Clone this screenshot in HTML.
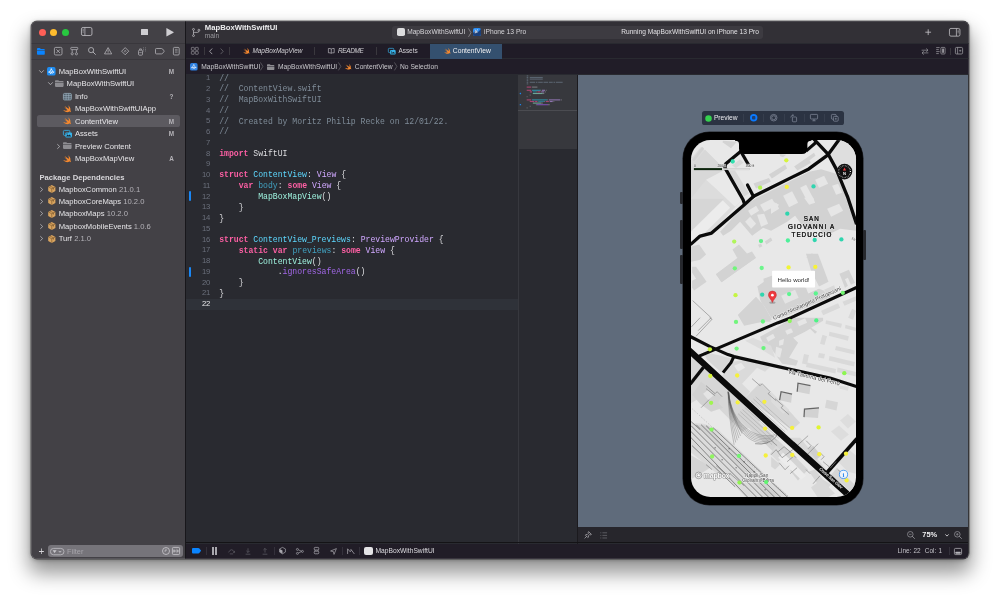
<!DOCTYPE html>
<html><head><meta charset="utf-8">
<style>
*{margin:0;padding:0;box-sizing:border-box}
html,body{width:1000px;height:601px;overflow:hidden;background:#fff}
body{position:relative;font-family:"Liberation Sans",sans-serif;font-size:7.65px;color:#e4e3e6}
.a{position:absolute}
svg{position:absolute;overflow:visible}
#win{will-change:transform;position:absolute;left:31px;top:21px;width:937.5px;height:537.5px;border-radius:6px;background:#18171b;overflow:hidden}
#shadow{position:absolute;left:31px;top:21px;width:937.5px;height:537.5px;border-radius:6px;box-shadow:0 0 0 0.5px rgba(0,0,0,.5),0 1px 4px rgba(0,0,0,.3),0 12px 20px 2px rgba(0,0,0,.42)}
#rim{position:absolute;left:0;top:0;width:937.5px;height:537.5px;border-radius:6px;box-shadow:inset 0 0 0 0.6px rgba(255,255,255,.22);pointer-events:none}
#side{left:0;top:0;width:153.9px;height:537.5px;background:#434146}
#main{left:155.3px;top:0;width:782.2px;height:537.5px;background:#292a30}
.row{position:absolute;height:12px;line-height:12px;white-space:nowrap;color:#e6e5e8}
.st{position:absolute;left:134.5px;width:12px;height:12px;line-height:12px;text-align:center;font-size:6.4px;font-weight:bold;color:#b5b3b8}
.ver{color:#b4b2b8}
.t1{position:absolute;white-space:nowrap;line-height:10px;height:10px}
#code{position:absolute;left:0;top:0;font-family:"Liberation Mono",monospace;font-size:8.15px;white-space:pre;color:#dfdfe2}
.ln{position:absolute;width:24px;text-align:right;font-family:"Liberation Sans",sans-serif;font-size:7.7px;letter-spacing:-0.25px;height:10.76px;line-height:10.76px}
.cl{position:absolute;height:10.76px;line-height:10.76px}
.c{color:#7f8c98}.k{color:#fc5fa3;font-weight:bold}.t{color:#5dd8ff}.v{color:#d0a8ff}.d{color:#41a1c0}.p{color:#9ef1dd}.f{color:#a167e6}
</style></head><body>
<div id="shadow"></div>
<div id="win">
<div id="side" class="a">
<div class="a" style="left:0;top:22px;width:153.9px;height:0.6px;background:#39373c"></div>
<div class="a" style="left:0;top:37.6px;width:153.9px;height:0.6px;background:#39373c"></div>
<div class="a" style="left:8.10px;top:7.50px;width:7px;height:7px;border-radius:50%;background:#fe5f57"></div>
<div class="a" style="left:19.30px;top:7.50px;width:7px;height:7px;border-radius:50%;background:#febc2e"></div>
<div class="a" style="left:30.50px;top:7.50px;width:7px;height:7px;border-radius:50%;background:#28c840"></div>
<svg style="left:50px;top:6.2px" width="11.4" height="9" viewBox="0 0 11.4 9"><rect x="0.45" y="0.45" width="10.5" height="8.1" rx="1.6" fill="none" stroke="#b9b8bc" stroke-width="0.9"/><path d="M3.9 0.5 V8.5" stroke="#b9b8bc" stroke-width="0.8"/><path d="M1.5 2.3 H2.9 M1.5 3.7 H2.9 M1.5 5.1 H2.9" stroke="#b9b8bc" stroke-width="0.6"/></svg>
<div class="a" style="left:110.2px;top:7.7px;width:6.6px;height:6.6px;border-radius:0.6px;background:#cfced2"></div>
<svg style="left:135px;top:6.8px" width="8" height="8.6" viewBox="0 0 8 8.6"><path d="M0.4 0.5 Q0.4 0 0.9 0.25 L7.5 3.95 Q7.9 4.3 7.5 4.65 L0.9 8.35 Q0.4 8.6 0.4 8.1 Z" fill="#cfced2"/></svg>
<svg style="left:6px;top:26.85px" width="7.8" height="6.8" viewBox="0 0 7.8 6.8"><path fill="#0a84ff" d="M0 0.9 Q0 0.1 0.8 0.1 L2.6 0.1 Q3.1 0.1 3.4 0.5 L3.8 1 L7 1 Q7.8 1 7.8 1.8 L7.8 2.1 L0 2.1 Z"/><path fill="#0a84ff" d="M0 2.6 L7.8 2.6 L7.8 5.9 Q7.8 6.7 7 6.7 L0.8 6.7 Q0 6.7 0 5.9 Z"/></svg>
<svg style="left:22.6px;top:26.05px" width="8.4" height="8.4" viewBox="0 0 8.4 8.4"><rect x="0.4" y="0.4" width="7.6" height="7.6" rx="1.3" fill="none" stroke="#b4b3b8" stroke-width="0.8"/><path d="M2.7 2.7 L5.7 5.7 M5.7 2.7 L2.7 5.7" stroke="#b4b3b8" stroke-width="0.8" stroke-linecap="round"/></svg>
<svg style="left:39.4px;top:26.05px" width="8.6" height="8.6" viewBox="0 0 8.6 8.6"><rect x="0.8" y="0.4" width="7" height="2.2" rx="0.6" fill="none" stroke="#b4b3b8" stroke-width="0.75"/><path d="M2.2 2.7 V5.6 M6.4 2.7 V5.6" stroke="#b4b3b8" stroke-width="0.75"/><circle cx="2.2" cy="6.8" r="1.1" fill="none" stroke="#b4b3b8" stroke-width="0.75"/><circle cx="6.4" cy="6.8" r="1.1" fill="none" stroke="#b4b3b8" stroke-width="0.75"/></svg>
<svg style="left:56.8px;top:26.35px" width="8" height="8" viewBox="0 0 8 8"><circle cx="3.1" cy="3.1" r="2.6" fill="none" stroke="#b4b3b8" stroke-width="0.85"/><path d="M5.1 5.1 L7.4 7.4" stroke="#b4b3b8" stroke-width="0.95" stroke-linecap="round"/></svg>
<svg style="left:73.4px;top:26.25px" width="8.2" height="7.6" viewBox="0 0 8.2 7.6"><path d="M4.1 0.6 L7.7 6.9 H0.5 Z" fill="none" stroke="#b4b3b8" stroke-width="0.8" stroke-linejoin="round"/><path d="M4.1 2.9 V4.7" stroke="#b4b3b8" stroke-width="0.8" stroke-linecap="round"/><circle cx="4.1" cy="5.8" r="0.45" fill="#b4b3b8"/></svg>
<svg style="left:90.4px;top:26.05px" width="8.4" height="8.4" viewBox="0 0 8.4 8.4"><path d="M4.2 0.6 L7.8 4.2 L4.2 7.8 L0.6 4.2 Z" fill="none" stroke="#b4b3b8" stroke-width="0.8" stroke-linejoin="round"/><path d="M4.2 3.2 L5.2 4.2 L4.2 5.2 L3.2 4.2 Z" fill="none" stroke="#b4b3b8" stroke-width="0.6"/></svg>
<svg style="left:107px;top:25.95px" width="9" height="8.6" viewBox="0 0 9 8.6"><rect x="0.5" y="3.2" width="4" height="5" rx="1" fill="none" stroke="#b4b3b8" stroke-width="0.75"/><path d="M1.6 3.1 V1.9 H3.4 V3.1" fill="none" stroke="#b4b3b8" stroke-width="0.7"/><path d="M1.3 5.6 H3.7" stroke="#b4b3b8" stroke-width="0.6"/><path d="M5.4 0.8 H6 M7 0.8 H7.6 M5.4 2.4 H6 M7 2.4 H7.6 M5.4 4 H6 M7 4 H7.6" stroke="#b4b3b8" stroke-width="0.7"/></svg>
<svg style="left:123.5px;top:27.05px" width="9.6" height="6.4" viewBox="0 0 9.6 6.4"><path d="M1.4 0.5 H6.6 Q7.1 0.5 7.5 0.9 L9 2.8 Q9.3 3.2 9 3.6 L7.5 5.5 Q7.1 5.9 6.6 5.9 H1.4 Q0.5 5.9 0.5 5 V1.4 Q0.5 0.5 1.4 0.5 Z" fill="none" stroke="#b4b3b8" stroke-width="0.8"/></svg>
<svg style="left:142.4px;top:26.05px" width="6.6" height="8.4" viewBox="0 0 6.6 8.4"><rect x="0.4" y="0.4" width="5.8" height="7.6" rx="1.1" fill="none" stroke="#b4b3b8" stroke-width="0.8"/><path d="M2 2.4 H4.6 M2 3.8 H4.6 M2 5.2 H4.6" stroke="#b4b3b8" stroke-width="0.55"/></svg>
<div class="row" style="left:27.7px;top:44.85px">MapBoxWithSwiftUI</div>
<div class="st" style="top:44.85px">M</div>
<svg style="left:8.399999999999999px;top:48.74999999999999px" width="5" height="3.4" viewBox="0 0 5 3.4"><path d="M0.5 0.6 L2.5 2.7 L4.5 0.6" fill="none" stroke="#aeadb2" stroke-width="0.9" stroke-linecap="round" stroke-linejoin="round"/></svg>
<svg style="left:16.2px;top:46.05px" width="8.6" height="8.6" viewBox="0 0 8.6 8.6"><rect width="8.6" height="8.6" rx="1.9" fill="#1f8cf0"/><path d="M4.3 1.9 L2.2 5.6 M4.3 1.9 L6.4 5.6 M1.7 5 H6.9 M3.4 6.7 L4.3 5.2 L5.2 6.7" fill="none" stroke="#fff" stroke-width="0.75" stroke-linecap="round"/></svg>
<div class="row" style="left:35.6px;top:57.30px">MapBoxWithSwiftUI</div>
<svg style="left:16.6px;top:61.199999999999996px" width="5" height="3.4" viewBox="0 0 5 3.4"><path d="M0.5 0.6 L2.5 2.7 L4.5 0.6" fill="none" stroke="#aeadb2" stroke-width="0.9" stroke-linecap="round" stroke-linejoin="round"/></svg>
<svg style="left:23.799999999999997px;top:59.199999999999996px" width="8.6" height="7" viewBox="0 0 8.6 7"><path fill="#8d8c91" d="M0 1 Q0 0.2 0.8 0.2 L2.9 0.2 Q3.4 0.2 3.7 0.6 L4.1 1.1 L7.8 1.1 Q8.6 1.1 8.6 1.9 L8.6 2.2 L0 2.2 Z"/><path fill="#8d8c91" d="M0 2.8 L8.6 2.8 L8.6 6.1 Q8.6 6.9 7.8 6.9 L0.8 6.9 Q0 6.9 0 6.1 Z"/></svg>
<div class="row" style="left:43.9px;top:69.75px">Info</div>
<div class="st" style="top:69.75px">?</div>
<svg style="left:32.0px;top:71.55px" width="8.8" height="7.4" viewBox="0 0 8.8 7.4"><rect x="0.4" y="0.4" width="8" height="6.6" rx="1.2" fill="#52606b" stroke="#9fb6c4" stroke-width="0.7"/><path d="M3.1 0.5 V6.9 M5.7 0.5 V6.9 M0.5 2.6 H8.3 M0.5 4.8 H8.3" stroke="#9fb6c4" stroke-width="0.6"/></svg>
<div class="row" style="left:43.9px;top:82.20px">MapBoxWithSwiftUIApp</div>
<svg style="left:32.4px;top:83.79999999999998px" width="8.2" height="7.6" viewBox="2.3 3.3 18.6 16.8"><path fill="#f5882e" d="M13.543 3.41c4.114 2.47 6.545 7.162 5.549 11.131-.024.093-.05.181-.076.272l.002.001c2.062 2.538 1.5 5.258 1.236 4.745-1.072-2.086-3.066-1.568-4.088-1.043a6.803 6.803 0 0 1-.281.158l-.02.012-.002.002c-2.115 1.123-4.957 1.205-7.812-.022a12.568 12.568 0 0 1-5.64-4.838c.649.48 1.35.902 2.097 1.252 3.019 1.414 6.051 1.311 8.197-.002C9.651 12.73 7.101 9.67 5.146 7.191a10.628 10.628 0 0 1-1.005-1.384c2.34 2.142 6.038 4.83 7.365 5.576C8.69 8.408 6.208 4.743 6.324 4.86c4.436 4.47 8.528 6.996 8.528 6.996.154.085.27.154.36.213.085-.215.16-.437.224-.668.708-2.588-.09-5.548-1.893-7.992z"/></svg>
<div class="a" style="left:6.3px;top:94.15px;width:142.7px;height:12px;border-radius:2.6px;background:#5c5a60"></div>
<div class="row" style="left:43.9px;top:94.65px">ContentView</div>
<div class="st" style="top:94.65px">M</div>
<svg style="left:32.4px;top:96.24999999999999px" width="8.2" height="7.6" viewBox="2.3 3.3 18.6 16.8"><path fill="#f5882e" d="M13.543 3.41c4.114 2.47 6.545 7.162 5.549 11.131-.024.093-.05.181-.076.272l.002.001c2.062 2.538 1.5 5.258 1.236 4.745-1.072-2.086-3.066-1.568-4.088-1.043a6.803 6.803 0 0 1-.281.158l-.02.012-.002.002c-2.115 1.123-4.957 1.205-7.812-.022a12.568 12.568 0 0 1-5.64-4.838c.649.48 1.35.902 2.097 1.252 3.019 1.414 6.051 1.311 8.197-.002C9.651 12.73 7.101 9.67 5.146 7.191a10.628 10.628 0 0 1-1.005-1.384c2.34 2.142 6.038 4.83 7.365 5.576C8.69 8.408 6.208 4.743 6.324 4.86c4.436 4.47 8.528 6.996 8.528 6.996.154.085.27.154.36.213.085-.215.16-.437.224-.668.708-2.588-.09-5.548-1.893-7.992z"/></svg>
<div class="row" style="left:43.9px;top:107.10px">Assets</div>
<div class="st" style="top:107.10px">M</div>
<svg style="left:31.8px;top:108.60px" width="9.4" height="8" viewBox="0 0 9.4 8"><rect x="0.4" y="0.4" width="6.4" height="5" rx="1.1" fill="none" stroke="#37b4ea" stroke-width="0.8"/><rect x="2.4" y="2.4" width="6.6" height="5.2" rx="1.1" fill="#37b4ea"/><path d="M3 6.6 L4.6 4.6 L5.6 5.6 L6.6 4.4 L8.4 6.6 Z" fill="#1d2a35"/><circle cx="4" cy="3.8" r="0.55" fill="#1d2a35"/></svg>
<div class="row" style="left:43.9px;top:119.55px">Preview Content</div>
<svg style="left:25.799999999999997px;top:122.54999999999998px" width="3.4" height="5" viewBox="0 0 3.4 5"><path d="M0.6 0.5 L2.7 2.5 L0.6 4.5" fill="none" stroke="#aeadb2" stroke-width="0.9" stroke-linecap="round" stroke-linejoin="round"/></svg>
<svg style="left:32px;top:121.44999999999999px" width="8.6" height="7" viewBox="0 0 8.6 7"><path fill="#8d8c91" d="M0 1 Q0 0.2 0.8 0.2 L2.9 0.2 Q3.4 0.2 3.7 0.6 L4.1 1.1 L7.8 1.1 Q8.6 1.1 8.6 1.9 L8.6 2.2 L0 2.2 Z"/><path fill="#8d8c91" d="M0 2.8 L8.6 2.8 L8.6 6.1 Q8.6 6.9 7.8 6.9 L0.8 6.9 Q0 6.9 0 6.1 Z"/></svg>
<div class="row" style="left:43.9px;top:132.00px">MapBoxMapView</div>
<div class="st" style="top:132.00px">A</div>
<svg style="left:32.4px;top:133.6px" width="8.2" height="7.6" viewBox="2.3 3.3 18.6 16.8"><path fill="#f5882e" d="M13.543 3.41c4.114 2.47 6.545 7.162 5.549 11.131-.024.093-.05.181-.076.272l.002.001c2.062 2.538 1.5 5.258 1.236 4.745-1.072-2.086-3.066-1.568-4.088-1.043a6.803 6.803 0 0 1-.281.158l-.02.012-.002.002c-2.115 1.123-4.957 1.205-7.812-.022a12.568 12.568 0 0 1-5.64-4.838c.649.48 1.35.902 2.097 1.252 3.019 1.414 6.051 1.311 8.197-.002C9.651 12.73 7.101 9.67 5.146 7.191a10.628 10.628 0 0 1-1.005-1.384c2.34 2.142 6.038 4.83 7.365 5.576C8.69 8.408 6.208 4.743 6.324 4.86c4.436 4.47 8.528 6.996 8.528 6.996.154.085.27.154.36.213.085-.215.16-.437.224-.668.708-2.588-.09-5.548-1.893-7.992z"/></svg>
<div class="row" style="left:8.5px;top:150.80px;font-weight:bold;color:#d9d8dc">Package Dependencies</div>
<div class="row" style="left:27.7px;top:162.50px">MapboxCommon <span class="ver">21.0.1</span></div>
<svg style="left:9.399999999999999px;top:165.5px" width="3.4" height="5" viewBox="0 0 3.4 5"><path d="M0.6 0.5 L2.7 2.5 L0.6 4.5" fill="none" stroke="#aeadb2" stroke-width="0.9" stroke-linecap="round" stroke-linejoin="round"/></svg>
<svg style="left:16.6px;top:163.9px" width="7.6" height="8" viewBox="0 0 7.6 8"><path fill="#d9a45f" d="M3.8 0 L7.4 1.9 L7.4 6 L3.8 8 L0.2 6 L0.2 1.9 Z"/><path fill="none" stroke="#6b4a22" stroke-width="0.55" d="M0.4 2 L3.8 3.8 L7.2 2 M3.8 3.8 L3.8 7.8 M2 1 L5.5 2.9 L5.5 4.6"/></svg>
<div class="row" style="left:27.7px;top:174.92px">MapboxCoreMaps <span class="ver">10.2.0</span></div>
<svg style="left:9.399999999999999px;top:177.92px" width="3.4" height="5" viewBox="0 0 3.4 5"><path d="M0.6 0.5 L2.7 2.5 L0.6 4.5" fill="none" stroke="#aeadb2" stroke-width="0.9" stroke-linecap="round" stroke-linejoin="round"/></svg>
<svg style="left:16.6px;top:176.32px" width="7.6" height="8" viewBox="0 0 7.6 8"><path fill="#d9a45f" d="M3.8 0 L7.4 1.9 L7.4 6 L3.8 8 L0.2 6 L0.2 1.9 Z"/><path fill="none" stroke="#6b4a22" stroke-width="0.55" d="M0.4 2 L3.8 3.8 L7.2 2 M3.8 3.8 L3.8 7.8 M2 1 L5.5 2.9 L5.5 4.6"/></svg>
<div class="row" style="left:27.7px;top:187.34px">MapboxMaps <span class="ver">10.2.0</span></div>
<svg style="left:9.399999999999999px;top:190.34px" width="3.4" height="5" viewBox="0 0 3.4 5"><path d="M0.6 0.5 L2.7 2.5 L0.6 4.5" fill="none" stroke="#aeadb2" stroke-width="0.9" stroke-linecap="round" stroke-linejoin="round"/></svg>
<svg style="left:16.6px;top:188.74px" width="7.6" height="8" viewBox="0 0 7.6 8"><path fill="#d9a45f" d="M3.8 0 L7.4 1.9 L7.4 6 L3.8 8 L0.2 6 L0.2 1.9 Z"/><path fill="none" stroke="#6b4a22" stroke-width="0.55" d="M0.4 2 L3.8 3.8 L7.2 2 M3.8 3.8 L3.8 7.8 M2 1 L5.5 2.9 L5.5 4.6"/></svg>
<div class="row" style="left:27.7px;top:199.76px">MapboxMobileEvents <span class="ver">1.0.6</span></div>
<svg style="left:9.399999999999999px;top:202.76px" width="3.4" height="5" viewBox="0 0 3.4 5"><path d="M0.6 0.5 L2.7 2.5 L0.6 4.5" fill="none" stroke="#aeadb2" stroke-width="0.9" stroke-linecap="round" stroke-linejoin="round"/></svg>
<svg style="left:16.6px;top:201.16px" width="7.6" height="8" viewBox="0 0 7.6 8"><path fill="#d9a45f" d="M3.8 0 L7.4 1.9 L7.4 6 L3.8 8 L0.2 6 L0.2 1.9 Z"/><path fill="none" stroke="#6b4a22" stroke-width="0.55" d="M0.4 2 L3.8 3.8 L7.2 2 M3.8 3.8 L3.8 7.8 M2 1 L5.5 2.9 L5.5 4.6"/></svg>
<div class="row" style="left:27.7px;top:212.18px">Turf <span class="ver">2.1.0</span></div>
<svg style="left:9.399999999999999px;top:215.18px" width="3.4" height="5" viewBox="0 0 3.4 5"><path d="M0.6 0.5 L2.7 2.5 L0.6 4.5" fill="none" stroke="#aeadb2" stroke-width="0.9" stroke-linecap="round" stroke-linejoin="round"/></svg>
<svg style="left:16.6px;top:213.58px" width="7.6" height="8" viewBox="0 0 7.6 8"><path fill="#d9a45f" d="M3.8 0 L7.4 1.9 L7.4 6 L3.8 8 L0.2 6 L0.2 1.9 Z"/><path fill="none" stroke="#6b4a22" stroke-width="0.55" d="M0.4 2 L3.8 3.8 L7.2 2 M3.8 3.8 L3.8 7.8 M2 1 L5.5 2.9 L5.5 4.6"/></svg>
<div class="a" style="left:16.7px;top:524.2px;width:135.2px;height:12.2px;border-radius:3px;background:#76747a"></div>
<div class="a" style="left:7.6px;top:525.0px;font-size:10px;line-height:12px;color:#d6d5d9">+</div>
<svg style="left:19.4px;top:527.0px" width="14.4" height="7.2" viewBox="0 0 14.4 7.2"><rect x="0.4" y="0.4" width="13.6" height="6.4" rx="3.2" fill="none" stroke="#c0bfc4" stroke-width="0.8"/><path d="M2.6 2.2 H6.6 L4.6 5 Z" fill="#c8c7cc"/><path d="M8.7 2.9 L10 4.3 L11.3 2.9" fill="none" stroke="#d0cfd4" stroke-width="0.85"/></svg>
<div class="a" style="left:36.0px;top:524.6px;line-height:11.8px;font-size:7.4px;color:#a6a4aa">Filter</div>
<svg style="left:130.6px;top:526.4px" width="8" height="8" viewBox="0 0 8 8"><circle cx="4" cy="4" r="3.5" fill="none" stroke="#d0cfd3" stroke-width="0.75"/><path d="M4 1.8 V4 H2.4" fill="none" stroke="#d0cfd3" stroke-width="0.75"/></svg>
<svg style="left:140.6px;top:526.4px" width="8" height="8" viewBox="0 0 8 8"><rect x="0.4" y="0.4" width="7.2" height="7.2" rx="1.2" fill="none" stroke="#d0cfd3" stroke-width="0.75"/><path d="M1.6 4 H6.4 M4.6 2.4 L6.4 4 L4.6 5.6" fill="none" stroke="#d0cfd3" stroke-width="0.7"/><path d="M2 2.6 V5.4" stroke="#d0cfd3" stroke-width="0.9"/></svg>
</div>
<div id="main" class="a">
<div class="a" style="left:0;top:0;width:783px;height:21.7px;background:#323036"></div>
<div class="a" style="left:0;top:22.6px;width:783px;height:14.9px;background:#201c27"></div>
<div class="a" style="left:0;top:37.9px;width:783px;height:15.6px;background:#211d28"></div>
<svg style="left:5.7px;top:6.8px" width="8.4" height="9" viewBox="0 0 8.4 9"><circle cx="1.5" cy="1.4" r="0.95" fill="none" stroke="#c4c3c7" stroke-width="0.7"/><circle cx="1.5" cy="7.6" r="0.95" fill="none" stroke="#c4c3c7" stroke-width="0.7"/><circle cx="6.9" cy="2.2" r="0.95" fill="none" stroke="#c4c3c7" stroke-width="0.7"/><path d="M1.5 2.4 V6.6 M1.5 5.2 Q1.5 4.4 2.6 4.4 H5.4 Q6.9 4.4 6.9 3.2" fill="none" stroke="#c4c3c7" stroke-width="0.7"/></svg>
<div class="t1" style="left:18.5px;top:2.2px;font-weight:bold;font-size:7.7px;color:#ececee">MapBoxWithSwiftUI</div>
<div class="t1" style="left:18.5px;top:10px;font-size:6.6px;color:#9a999e">main</div>
<div class="a" style="left:205.7px;top:5.2px;width:371px;height:12.4px;border-radius:3px;background:#3d3b41"></div>
<div class="a" style="left:210.7px;top:7.2px;width:8px;height:8px;border-radius:1.8px;background:#dcdcde"></div>
<div class="t1" style="left:220.9px;top:6.2px;font-size:6.6px;color:#d6d5d9">MapBoxWithSwiftUI</div>
<svg style="left:281.3px;top:6.6px" width="3.6" height="9.4" viewBox="0 0 3.6 9.4"><path d="M0.5 0.5 L3 4.7 L0.5 8.9" fill="none" stroke="#a9a8ad" stroke-width="0.6"/></svg>
<svg style="left:286.9px;top:7.2px" width="8" height="8" viewBox="0 0 8 8"><rect width="8" height="8" rx="1.8" fill="#2a8cf2"/><path d="M0 5 L3 2 L5 4 L8 1 V6.2 Q8 8 6.2 8 H1.8 Q0 8 0 6.2 Z" fill="#1b3f7a"/><path d="M2 1.4 L3.4 4.6 M4.6 1.2 L2.2 5.4 M1.4 4 H5" stroke="#fff" stroke-width="0.6" fill="none"/></svg>
<div class="t1" style="left:297.7px;top:6.2px;font-size:6.68px;color:#d6d5d9">iPhone 13 Pro</div>
<div class="t1" style="left:434.9px;top:6px;font-size:6.62px;color:#e2e1e4">Running MapBoxWithSwiftUI on iPhone 13 Pro</div>
<svg style="left:738.5px;top:7.8px" width="6.4" height="6.4" viewBox="0 0 6.4 6.4"><path d="M3.2 0.3 V6.1 M0.3 3.2 H6.1" stroke="#c9c8cc" stroke-width="0.8"/></svg>
<svg style="left:762.3px;top:6.6px" width="11.4" height="8.6" viewBox="0 0 11.4 8.6"><rect x="0.45" y="0.45" width="10.5" height="7.7" rx="1.5" fill="none" stroke="#b9b8bc" stroke-width="0.85"/><path d="M7.4 0.5 V8.1" stroke="#b9b8bc" stroke-width="0.8"/><path d="M8.5 2.2 H9.9 M8.5 3.5 H9.9 M8.5 4.8 H9.9" stroke="#b9b8bc" stroke-width="0.55"/></svg>
<svg style="left:4.9px;top:26.4px" width="7.6" height="7.6" viewBox="0 0 7.6 7.6"><rect x="0.35" y="0.35" width="2.9" height="2.9" rx="0.5" fill="none" stroke="#9d9ca1" stroke-width="0.65"/><rect x="4.35" y="0.35" width="2.9" height="2.9" rx="0.5" fill="none" stroke="#9d9ca1" stroke-width="0.65"/><rect x="0.35" y="4.35" width="2.9" height="2.9" rx="0.5" fill="none" stroke="#9d9ca1" stroke-width="0.65"/><rect x="4.35" y="4.35" width="2.9" height="2.9" rx="0.5" fill="none" stroke="#9d9ca1" stroke-width="0.65"/></svg>
<div class="a" style="left:17.3px;top:26.4px;width:0.6px;height:7.4px;background:#3a383e"></div>
<svg style="left:22.9px;top:26.8px" width="3.8" height="6.6" viewBox="0 0 3.8 6.6"><path d="M3.2 0.5 L0.6 3.3 L3.2 6.1" fill="none" stroke="#b5b4b9" stroke-width="0.8"/></svg>
<svg style="left:33.9px;top:26.8px" width="3.8" height="6.6" viewBox="0 0 3.8 6.6"><path d="M0.6 0.5 L3.2 3.3 L0.6 6.1" fill="none" stroke="#6a696e" stroke-width="0.8"/></svg>
<div class="a" style="left:43.1px;top:26.4px;width:0.6px;height:7.4px;background:#3a383e"></div>
<svg style="left:56.7px;top:26.9px" width="6.6" height="6" viewBox="2.3 3.3 18.6 16.8"><path fill="#f5882e" d="M13.543 3.41c4.114 2.47 6.545 7.162 5.549 11.131-.024.093-.05.181-.076.272l.002.001c2.062 2.538 1.5 5.258 1.236 4.745-1.072-2.086-3.066-1.568-4.088-1.043a6.803 6.803 0 0 1-.281.158l-.02.012-.002.002c-2.115 1.123-4.957 1.205-7.812-.022a12.568 12.568 0 0 1-5.64-4.838c.649.48 1.35.902 2.097 1.252 3.019 1.414 6.051 1.311 8.197-.002C9.651 12.73 7.101 9.67 5.146 7.191a10.628 10.628 0 0 1-1.005-1.384c2.34 2.142 6.038 4.83 7.365 5.576C8.69 8.408 6.208 4.743 6.324 4.86c4.436 4.47 8.528 6.996 8.528 6.996.154.085.27.154.36.213.085-.215.16-.437.224-.668.708-2.588-.09-5.548-1.893-7.992z"/></svg>
<div class="t1" style="left:66.1px;top:25.2px;font-size:6.45px;font-style:italic;color:#d2d1d5">MapBoxMapView</div>
<div class="a" style="left:127.7px;top:26.4px;width:0.6px;height:7.4px;background:#3a383e"></div>
<svg style="left:141.7px;top:27.2px" width="6.6" height="5.6" viewBox="0 0 6.6 5.6"><path d="M3.3 1 Q2.2 0.3 0.4 0.5 V4.8 Q2.2 4.6 3.3 5.3 Q4.4 4.6 6.2 4.8 V0.5 Q4.4 0.3 3.3 1 Z M3.3 1 V5.2" fill="none" stroke="#c4c3c7" stroke-width="0.65" stroke-linejoin="round"/></svg>
<div class="t1" style="left:151.7px;top:25.2px;font-size:6.4px;letter-spacing:-0.3px;font-style:italic;color:#d2d1d5">README</div>
<div class="a" style="left:189.7px;top:26.4px;width:0.6px;height:7.4px;background:#3a383e"></div>
<svg style="left:201.7px;top:26.6px" width="8" height="6.8" viewBox="0 0 9.4 8"><rect x="0.4" y="0.4" width="6.4" height="5" rx="1.1" fill="none" stroke="#37b4ea" stroke-width="0.8"/><rect x="2.4" y="2.4" width="6.6" height="5.2" rx="1.1" fill="#37b4ea"/><path d="M3 6.6 L4.6 4.6 L5.6 5.6 L6.6 4.4 L8.4 6.6 Z" fill="#1d2a35"/><circle cx="4" cy="3.8" r="0.55" fill="#1d2a35"/></svg>
<div class="t1" style="left:212.1px;top:25.2px;font-size:6.45px;color:#d2d1d5">Assets</div>
<div class="a" style="left:243.7px;top:22.5px;width:72.4px;height:15.2px;background:#34506f"></div>
<svg style="left:257.7px;top:26.9px" width="6.6" height="6" viewBox="2.3 3.3 18.6 16.8"><path fill="#f5882e" d="M13.543 3.41c4.114 2.47 6.545 7.162 5.549 11.131-.024.093-.05.181-.076.272l.002.001c2.062 2.538 1.5 5.258 1.236 4.745-1.072-2.086-3.066-1.568-4.088-1.043a6.803 6.803 0 0 1-.281.158l-.02.012-.002.002c-2.115 1.123-4.957 1.205-7.812-.022a12.568 12.568 0 0 1-5.64-4.838c.649.48 1.35.902 2.097 1.252 3.019 1.414 6.051 1.311 8.197-.002C9.651 12.73 7.101 9.67 5.146 7.191a10.628 10.628 0 0 1-1.005-1.384c2.34 2.142 6.038 4.83 7.365 5.576C8.69 8.408 6.208 4.743 6.324 4.86c4.436 4.47 8.528 6.996 8.528 6.996.154.085.27.154.36.213.085-.215.16-.437.224-.668.708-2.588-.09-5.548-1.893-7.992z"/></svg>
<div class="t1" style="left:266.5px;top:25.2px;font-size:6.72px;color:#f0f0f2">ContentView</div>
<svg style="left:734.7px;top:26.6px" width="8" height="7" viewBox="0 0 8 7"><path d="M0.6 2.2 H7 M5.2 0.5 L7 2.2 L5.2 3.9 M7.4 4.9 H1 M2.8 3.2 L1 4.9 L2.8 6.6" fill="none" stroke="#a3a2a7" stroke-width="0.65"/></svg>
<svg style="left:749.3px;top:26.4px" width="9.6" height="7.4" viewBox="0 0 9.6 7.4"><path d="M0.2 0.6 H3.6 M0.2 2.6 H2.8 M0.2 4.6 H3.6 M0.2 6.6 H2.8" stroke="#a3a2a7" stroke-width="0.7"/><rect x="4.9" y="0.4" width="4.2" height="6.6" rx="0.8" fill="none" stroke="#a3a2a7" stroke-width="0.7"/><rect x="6.2" y="1.6" width="1.7" height="4.2" fill="#a3a2a7"/></svg>
<div class="a" style="left:763.7px;top:26.6px;width:0.6px;height:7px;background:#3a383e"></div>
<svg style="left:768.5px;top:26.4px" width="8" height="7.4" viewBox="0 0 8 7.4"><rect x="0.4" y="0.4" width="7.2" height="6.6" rx="1.2" fill="none" stroke="#a3a2a7" stroke-width="0.75"/><path d="M2.6 0.5 V6.9" stroke="#a3a2a7" stroke-width="0.7"/><path d="M4.1 3.7 H6.3 M5.2 2.6 V4.8" stroke="#a3a2a7" stroke-width="0.6"/></svg>
<svg style="left:3.9px;top:41.6px" width="7.6" height="7.6" viewBox="0 0 8.6 8.6"><rect width="8.6" height="8.6" rx="1.9" fill="#2d7fe0"/><path d="M4.3 1.9 L2.2 5.6 M4.3 1.9 L6.4 5.6 M1.7 5 H6.9 M3.4 6.7 L4.3 5.2 L5.2 6.7" fill="none" stroke="#e8f0fb" stroke-width="0.75" stroke-linecap="round"/></svg>
<div class="t1" style="left:14.9px;top:40.9px;color:#c9c8cc;font-size:6.7px">MapBoxWithSwiftUI</div>
<svg style="left:74.1px;top:41.2px" width="3.4" height="8.8" viewBox="0 0 3.4 8.8"><path d="M0.4 0.4 L2.9 4.4 L0.4 8.4" fill="none" stroke="#7d7c81" stroke-width="0.55"/></svg>
<svg style="left:81.1px;top:42.6px" width="7.4" height="6" viewBox="0 0 8.6 7"><path fill="#8d8c91" d="M0 1 Q0 0.2 0.8 0.2 L2.9 0.2 Q3.4 0.2 3.7 0.6 L4.1 1.1 L7.8 1.1 Q8.6 1.1 8.6 1.9 L8.6 2.2 L0 2.2 Z"/><path fill="#8d8c91" d="M0 2.8 L8.6 2.8 L8.6 6.1 Q8.6 6.9 7.8 6.9 L0.8 6.9 Q0 6.9 0 6.1 Z"/></svg>
<div class="t1" style="left:91.7px;top:40.9px;color:#c9c8cc;font-size:6.7px">MapBoxWithSwiftUI</div>
<svg style="left:151.3px;top:41.2px" width="3.4" height="8.8" viewBox="0 0 3.4 8.8"><path d="M0.4 0.4 L2.9 4.4 L0.4 8.4" fill="none" stroke="#7d7c81" stroke-width="0.55"/></svg>
<svg style="left:159.1px;top:42.6px" width="6.4" height="5.8" viewBox="2.3 3.3 18.6 16.8"><path fill="#f5882e" d="M13.543 3.41c4.114 2.47 6.545 7.162 5.549 11.131-.024.093-.05.181-.076.272l.002.001c2.062 2.538 1.5 5.258 1.236 4.745-1.072-2.086-3.066-1.568-4.088-1.043a6.803 6.803 0 0 1-.281.158l-.02.012-.002.002c-2.115 1.123-4.957 1.205-7.812-.022a12.568 12.568 0 0 1-5.64-4.838c.649.48 1.35.902 2.097 1.252 3.019 1.414 6.051 1.311 8.197-.002C9.651 12.73 7.101 9.67 5.146 7.191a10.628 10.628 0 0 1-1.005-1.384c2.34 2.142 6.038 4.83 7.365 5.576C8.69 8.408 6.208 4.743 6.324 4.86c4.436 4.47 8.528 6.996 8.528 6.996.154.085.27.154.36.213.085-.215.16-.437.224-.668.708-2.588-.09-5.548-1.893-7.992z"/></svg>
<div class="t1" style="left:168.5px;top:40.9px;color:#c9c8cc;font-size:6.7px">ContentView</div>
<svg style="left:208.1px;top:41.2px" width="3.4" height="8.8" viewBox="0 0 3.4 8.8"><path d="M0.4 0.4 L2.9 4.4 L0.4 8.4" fill="none" stroke="#7d7c81" stroke-width="0.55"/></svg>
<div class="t1" style="left:213.7px;top:40.9px;color:#c9c8cc;font-size:6.7px">No Selection</div>
<div class="a" style="left:0;top:53.5px;width:332.0px;height:469.0px;background:#292a30"></div>
<div class="a" style="left:0;top:277.5px;width:332.0px;height:11.2px;background:#2f3239"></div>
<div class="a" style="left:2.9px;top:170.26px;width:2.2px;height:10px;border-radius:1.1px;background:#1a87f5"></div>
<div class="a" style="left:2.9px;top:245.58px;width:2.2px;height:10px;border-radius:1.1px;background:#1a87f5"></div>
<div id="code">
<div class="ln" style="left:-0.2px;top:52.22px;color:#6b707c">1</div>
<div class="cl" style="left:32.9px;top:52.62px"><span class="c">//</span></div>
<div class="ln" style="left:-0.2px;top:62.98px;color:#6b707c">2</div>
<div class="cl" style="left:32.9px;top:63.38px"><span class="c">//  ContentView.swift</span></div>
<div class="ln" style="left:-0.2px;top:73.74px;color:#6b707c">3</div>
<div class="cl" style="left:32.9px;top:74.14px"><span class="c">//  MapBoxWithSwiftUI</span></div>
<div class="ln" style="left:-0.2px;top:84.5px;color:#6b707c">4</div>
<div class="cl" style="left:32.9px;top:84.9px"><span class="c">//</span></div>
<div class="ln" style="left:-0.2px;top:95.26px;color:#6b707c">5</div>
<div class="cl" style="left:32.9px;top:95.66px"><span class="c">//  Created by Moritz Philip Recke on 12/01/22.</span></div>
<div class="ln" style="left:-0.2px;top:106.02px;color:#6b707c">6</div>
<div class="cl" style="left:32.9px;top:106.42px"><span class="c">//</span></div>
<div class="ln" style="left:-0.2px;top:116.78px;color:#6b707c">7</div>
<div class="ln" style="left:-0.2px;top:127.54px;color:#6b707c">8</div>
<div class="cl" style="left:32.9px;top:127.94px"><span class="k">import</span> SwiftUI</div>
<div class="ln" style="left:-0.2px;top:138.3px;color:#6b707c">9</div>
<div class="ln" style="left:-0.2px;top:149.06px;color:#6b707c">10</div>
<div class="cl" style="left:32.9px;top:149.46px"><span class="k">struct</span> <span class="t">ContentView</span>: <span class="v">View</span> {</div>
<div class="ln" style="left:-0.2px;top:159.82px;color:#6b707c">11</div>
<div class="cl" style="left:32.9px;top:160.22px">    <span class="k">var</span> <span class="d">body</span>: <span class="k">some</span> <span class="v">View</span> {</div>
<div class="ln" style="left:-0.2px;top:170.58px;color:#6b707c">12</div>
<div class="cl" style="left:32.9px;top:170.98px">        <span class="p">MapBoxMapView</span>()</div>
<div class="ln" style="left:-0.2px;top:181.34px;color:#6b707c">13</div>
<div class="cl" style="left:32.9px;top:181.74px">    }</div>
<div class="ln" style="left:-0.2px;top:192.1px;color:#6b707c">14</div>
<div class="cl" style="left:32.9px;top:192.5px">}</div>
<div class="ln" style="left:-0.2px;top:202.86px;color:#6b707c">15</div>
<div class="ln" style="left:-0.2px;top:213.62px;color:#6b707c">16</div>
<div class="cl" style="left:32.9px;top:214.02px"><span class="k">struct</span> <span class="t">ContentView_Previews</span>: <span class="v">PreviewProvider</span> {</div>
<div class="ln" style="left:-0.2px;top:224.38px;color:#6b707c">17</div>
<div class="cl" style="left:32.9px;top:224.78px">    <span class="k">static</span> <span class="k">var</span> <span class="d">previews</span>: <span class="k">some</span> <span class="v">View</span> {</div>
<div class="ln" style="left:-0.2px;top:235.14px;color:#6b707c">18</div>
<div class="cl" style="left:32.9px;top:235.54px">        <span class="p">ContentView</span>()</div>
<div class="ln" style="left:-0.2px;top:245.9px;color:#6b707c">19</div>
<div class="cl" style="left:32.9px;top:246.3px">            .<span class="f">ignoresSafeArea</span>()</div>
<div class="ln" style="left:-0.2px;top:256.66px;color:#6b707c">20</div>
<div class="cl" style="left:32.9px;top:257.06px">    }</div>
<div class="ln" style="left:-0.2px;top:267.42px;color:#6b707c">21</div>
<div class="cl" style="left:32.9px;top:267.82px">}</div>
<div class="ln" style="left:-0.2px;top:278.18px;color:#e6e6e8">22</div>
</div>
<div class="a" style="left:332.0px;top:53.5px;width:58.9px;height:469.0px;background:#292a30;border-left:0.6px solid #37383e"></div>
<div class="a" style="left:332.0px;top:53.5px;width:58.9px;height:74.3px;background:#37383d"></div>
<div class="a" style="left:332.0px;top:89.2px;width:58.9px;height:0.9px;background:#4b4c51"></div>
<svg style="left:332.0px;top:53.5px" width="58.9" height="40" viewBox="0 0 58.9 40"><rect x="8.70" y="0.35" width="1.53" height="1.1" fill="#59636f"/><rect x="8.70" y="1.95" width="1.53" height="1.1" fill="#59636f"/><rect x="11.76" y="1.95" width="13.01" height="1.1" fill="#59636f"/><rect x="8.70" y="3.55" width="1.53" height="1.1" fill="#59636f"/><rect x="11.76" y="3.55" width="13.01" height="1.1" fill="#59636f"/><rect x="8.70" y="5.15" width="1.53" height="1.1" fill="#59636f"/><rect x="8.70" y="6.75" width="1.53" height="1.1" fill="#59636f"/><rect x="11.76" y="6.75" width="5.36" height="1.1" fill="#59636f"/><rect x="17.88" y="6.75" width="1.53" height="1.1" fill="#59636f"/><rect x="20.18" y="6.75" width="4.59" height="1.1" fill="#59636f"/><rect x="25.53" y="6.75" width="4.59" height="1.1" fill="#59636f"/><rect x="30.89" y="6.75" width="3.83" height="1.1" fill="#59636f"/><rect x="35.48" y="6.75" width="1.53" height="1.1" fill="#59636f"/><rect x="37.77" y="6.75" width="6.88" height="1.1" fill="#59636f"/><rect x="8.70" y="8.35" width="1.53" height="1.1" fill="#59636f"/><rect x="8.70" y="11.55" width="4.59" height="1.1" fill="#a84470"/><rect x="14.06" y="11.55" width="5.36" height="1.1" fill="#77787c"/><rect x="8.70" y="14.75" width="4.59" height="1.1" fill="#a84470"/><rect x="14.06" y="14.75" width="8.42" height="1.1" fill="#2f8ea6"/><rect x="22.47" y="14.75" width="0.77" height="1.1" fill="#77787c"/><rect x="24.00" y="14.75" width="3.06" height="1.1" fill="#8d73ad"/><rect x="27.83" y="14.75" width="0.77" height="1.1" fill="#77787c"/><rect x="11.76" y="16.35" width="2.29" height="1.1" fill="#a84470"/><rect x="14.82" y="16.35" width="3.06" height="1.1" fill="#2c7289"/><rect x="17.88" y="16.35" width="0.77" height="1.1" fill="#77787c"/><rect x="19.41" y="16.35" width="3.06" height="1.1" fill="#a84470"/><rect x="23.24" y="16.35" width="3.06" height="1.1" fill="#8d73ad"/><rect x="27.06" y="16.35" width="0.77" height="1.1" fill="#77787c"/><rect x="14.82" y="17.95" width="9.95" height="1.1" fill="#6ea597"/><rect x="24.77" y="17.95" width="1.53" height="1.1" fill="#77787c"/><rect x="11.76" y="19.55" width="0.77" height="1.1" fill="#77787c"/><rect x="8.70" y="21.15" width="0.77" height="1.1" fill="#77787c"/><rect x="8.70" y="24.35" width="4.59" height="1.1" fill="#a84470"/><rect x="14.06" y="24.35" width="15.30" height="1.1" fill="#2f8ea6"/><rect x="29.36" y="24.35" width="0.77" height="1.1" fill="#77787c"/><rect x="30.89" y="24.35" width="11.47" height="1.1" fill="#8d73ad"/><rect x="43.13" y="24.35" width="0.77" height="1.1" fill="#77787c"/><rect x="11.76" y="25.95" width="4.59" height="1.1" fill="#a84470"/><rect x="17.12" y="25.95" width="2.29" height="1.1" fill="#a84470"/><rect x="20.18" y="25.95" width="6.12" height="1.1" fill="#2c7289"/><rect x="26.30" y="25.95" width="0.77" height="1.1" fill="#77787c"/><rect x="27.83" y="25.95" width="3.06" height="1.1" fill="#a84470"/><rect x="31.65" y="25.95" width="3.06" height="1.1" fill="#8d73ad"/><rect x="35.48" y="25.95" width="0.77" height="1.1" fill="#77787c"/><rect x="14.82" y="27.55" width="8.42" height="1.1" fill="#6ea597"/><rect x="23.24" y="27.55" width="1.53" height="1.1" fill="#77787c"/><rect x="17.88" y="29.15" width="0.77" height="1.1" fill="#77787c"/><rect x="18.65" y="29.15" width="11.47" height="1.1" fill="#7a4fb0"/><rect x="30.12" y="29.15" width="1.53" height="1.1" fill="#77787c"/><rect x="11.76" y="30.75" width="0.77" height="1.1" fill="#77787c"/><rect x="8.70" y="32.35" width="0.77" height="1.1" fill="#77787c"/><rect x="1.70" y="17.85" width="1.4" height="1.3" rx="0.4" fill="#1a87f5"/><rect x="1.70" y="29.05" width="1.4" height="1.3" rx="0.4" fill="#1a87f5"/></svg>
<div class="a" style="left:390.9px;top:53.5px;width:1px;height:469.0px;background:#1b1a1e"></div>
<div class="a" style="left:391.9px;top:53.5px;width:390.3px;height:452.0px;background:#5f6b7b"></div>
<div class="a" style="left:515.7px;top:89.8px;width:142.3px;height:14.2px;border-radius:2.6px;background:#2b3342"></div>
<svg style="left:518.7px;top:93.5px" width="7" height="7" viewBox="0 0 7 7"><circle cx="3.5" cy="3.5" r="3.25" fill="#35d14f"/></svg>
<div class="t1" style="left:527.6px;top:92px;font-size:6.65px;color:#ececf0">Preview</div>
<div class="a" style="left:556.9px;top:92.6px;width:0.6px;height:8.6px;background:#363e4d"></div>
<div class="a" style="left:577.0px;top:92.6px;width:0.6px;height:8.6px;background:#363e4d"></div>
<div class="a" style="left:597.4px;top:92.6px;width:0.6px;height:8.6px;background:#363e4d"></div>
<div class="a" style="left:617.4px;top:92.6px;width:0.6px;height:8.6px;background:#363e4d"></div>
<div class="a" style="left:638.0px;top:92.6px;width:0.6px;height:8.6px;background:#363e4d"></div>
<svg style="left:563.5px;top:93.3px" width="7.4" height="7.4" viewBox="0 0 7.4 7.4"><circle cx="3.7" cy="3.7" r="3.7" fill="#0a7aff"/><rect x="2" y="2" width="3.4" height="3.4" rx="1" fill="#1f3f70"/></svg>
<svg style="left:583.8px;top:93.3px" width="7.4" height="7.4" viewBox="0 0 7.4 7.4"><circle cx="3.7" cy="3.7" r="3.3" fill="none" stroke="#8d95a5" stroke-width="0.65"/><circle cx="3.7" cy="3.7" r="2" fill="none" stroke="#8d95a5" stroke-width="0.65"/></svg>
<svg style="left:603.8px;top:92.8px" width="7.4" height="8.2" viewBox="0 0 7.4 8.2"><rect x="2.4" y="3" width="4.2" height="4.8" rx="0.9" fill="none" stroke="#8d95a5" stroke-width="0.65"/><path d="M0.8 3.6 Q0.8 1.2 3.4 1.2 M2.4 0.3 L3.5 1.2 L2.4 2.1" fill="none" stroke="#8d95a5" stroke-width="0.6"/></svg>
<svg style="left:624.2px;top:93.4px" width="8" height="7.4" viewBox="0 0 8 7.4"><rect x="0.4" y="0.4" width="7.2" height="4.6" rx="0.8" fill="none" stroke="#8d95a5" stroke-width="0.65"/><path d="M2.4 6.8 H5.6 M4 5 V6.8" stroke="#8d95a5" stroke-width="0.65"/></svg>
<svg style="left:644.9px;top:93.2px" width="7.6" height="7.6" viewBox="0 0 7.6 7.6"><rect x="0.4" y="0.4" width="4.8" height="4.8" rx="1" fill="none" stroke="#8d95a5" stroke-width="0.65"/><rect x="2.4" y="2.4" width="4.8" height="4.8" rx="1" fill="#2b3342" stroke="#8d95a5" stroke-width="0.65"/><path d="M4.8 3.8 V5.8 M3.8 4.8 H5.8" stroke="#8d95a5" stroke-width="0.55"/></svg>
<div class="a" style="left:493.9px;top:170.8px;width:3px;height:12.4px;border-radius:1px;background:#26282d"></div>
<div class="a" style="left:493.9px;top:198.8px;width:3px;height:29.2px;border-radius:1px;background:#26282d"></div>
<div class="a" style="left:493.9px;top:234.4px;width:3px;height:29.0px;border-radius:1px;background:#26282d"></div>
<div class="a" style="left:676.3px;top:208.8px;width:3.6px;height:30.6px;border-radius:1px;background:#26282d"></div>
<div class="a" style="left:496.6px;top:111.4px;width:180.5px;height:372.3px;border-radius:26.5px;background:#000;box-shadow:0 0 0 0.6px #24262b"></div>
<div class="a" style="left:504.60px;top:119.30px;width:164.8px;height:357.1px;border-radius:19.5px;overflow:hidden;background:#e8e8e8">
<svg style="left:0;top:0" width="164.8" height="357.1" viewBox="690.9 140.3 164.8 357.1" font-family="Liberation Sans, sans-serif">
<polygon points="690.0,160.0 701.0,147.0 722.0,167.0 742.0,200.0 712.0,232.0 690.0,243.0" fill="#dcdcdc"/>
<polygon points="690.0,168.0 705.0,150.0 725.0,170.0 706.0,180.0 690.0,200.0" fill="#d8d8d8"/>
<polygon points="706.0,180.0 725.0,170.0 742.0,200.0 735.0,207.0 716.0,189.0" fill="#e9e9e9"/>
<polygon points="690.0,233.0 722.5,200.5 730.0,208.0 712.0,226.0 691.0,246.0" fill="#ececec"/>
<polygon points="690.0,199.0 712.0,199.0 724.0,199.0 690.0,232.0" fill="#d6d6d6"/>
<polygon points="829.0,155.0 841.0,140.0 856.0,140.0 856.0,222.0 848.0,198.0 836.0,169.0" fill="#dedede"/>
<polygon points="722.9,141.0 736.9,142.0 730.9,148.5 722.4,142.5" fill="#d3d3d3"/>
<polygon points="692.0,160.0 702.0,147.0 704.0,149.0 694.0,162.0" fill="#d3d3d3"/>
<polygon points="731.9,165.9 739.9,159.5 743.4,163.0 735.9,168.4" fill="#d9d9d9"/>
<polygon points="727.9,170.9 734.9,170.9 748.9,193.9 743.9,196.9" fill="#d9d9d9"/>
<polygon points="753.4,183.9 768.8,178.4 770.8,181.9 755.9,188.9" fill="#d3d3d3"/>
<polygon points="768.8,174.9 785.0,164.9 787.0,168.9 771.8,178.9" fill="#d3d3d3"/>
<polygon points="794.0,166.9 813.9,153.0 815.4,156.0 809.4,160.5 810.9,163.0 797.4,170.9" fill="#d3d3d3"/>
<polygon points="779.5,154.0 786.0,155.0 783.0,157.5 780.0,156.5" fill="#d3d3d3"/>
<polygon points="720.0,232.0 744.0,206.0 756.0,198.5 809.0,172.0 821.0,169.5 836.0,174.0 848.0,200.0 855.0,222.0 856.0,231.0 840.0,229.0 826.0,236.0 818.0,228.0 806.0,231.0 795.0,216.0 787.0,222.0 771.0,231.0 763.0,228.0 752.0,236.0 740.0,222.0 731.0,231.0 723.0,236.0" fill="#d2d2d2"/>
<polygon points="748.0,211.0 756.0,206.0 759.0,211.0 751.0,216.0" fill="#e6e6e6"/>
<polygon points="760.0,205.0 772.0,199.0 776.0,206.0 764.0,212.0" fill="#e6e6e6"/>
<polygon points="771.0,205.0 776.0,203.0 779.0,209.0 771.0,214.0" fill="#e6e6e6"/>
<polygon points="783.0,196.0 792.0,191.5 798.0,203.0 789.0,207.5" fill="#e6e6e6"/>
<polygon points="800.0,188.0 806.0,185.0 814.0,200.0 808.0,203.0" fill="#e6e6e6"/>
<polygon points="815.0,180.0 824.0,176.0 828.0,184.0 819.0,188.0" fill="#e6e6e6"/>
<polygon points="827.0,209.0 839.0,204.0 843.0,211.0 831.0,217.0" fill="#e6e6e6"/>
<polygon points="804.0,198.0 813.0,198.0 815.0,203.0 809.0,205.0" fill="#e6e6e6"/>
<polygon points="745.0,222.0 750.0,217.0 756.0,224.0 751.0,229.0" fill="#e6e6e6"/>
<polygon points="757.0,215.0 764.0,214.0 768.0,224.0 761.0,227.0" fill="#e6e6e6"/>
<polygon points="771.0,201.0 779.0,205.0 771.0,214.0" fill="#e6e6e6"/>
<polygon points="832.0,186.0 838.0,184.0 842.0,193.0 836.0,195.0" fill="#e6e6e6"/>
<polygon points="764.8,241.9 770.8,237.9 772.3,240.9 766.3,244.9" fill="#d3d3d3"/>
<polygon points="757.9,245.0 760.9,244.0 762.3,246.5 759.4,248.0" fill="#d3d3d3"/>
<polygon points="732.4,249.9 738.9,244.9 746.9,253.9 751.9,251.9 755.9,258.0 737.9,258.0 715.9,274.5 721.4,282.5 755.9,258.0 737.0,258.0" fill="#d3d3d3"/>
<polygon points="715.9,274.5 737.9,258.0 755.9,258.0 721.4,282.5" fill="#d3d3d3"/>
<polygon points="691.0,246.9 699.0,244.9 706.0,254.9 700.0,260.0 691.0,262.0" fill="#d3d3d3"/>
<polygon points="692.0,267.0 696.0,267.0 706.5,282.0 694.0,290.9 692.0,288.0 692.0,281.0 696.0,279.0 692.0,273.0" fill="#d3d3d3"/>
<polygon points="806.0,258.0 812.0,253.5 814.0,258.0" fill="#d3d3d3"/>
<polygon points="805.9,254.0 817.9,254.0 828.4,282.0 818.9,286.9 811.0,271.0" fill="#d3d3d3"/>
<polygon points="757.4,286.9 763.8,283.0 763.3,279.0 771.8,276.0 806.0,288.0 808.0,294.0 819.0,289.0 824.0,291.0 828.4,298.0 781.0,318.0 771.0,318.0 763.8,305.9 755.9,297.4 737.9,315.4 742.0,322.0 770.8,322.0 760.0,300.0" fill="#d3d3d3"/>
<polygon points="737.9,315.4 755.9,297.4 763.8,305.9 772.0,320.0 744.0,326.0" fill="#d3d3d3"/>
<polygon points="757.4,286.9 771.8,276.0 805.0,288.0 808.0,294.0 819.0,289.0 828.4,298.0 781.0,318.5 768.0,312.0" fill="#d3d3d3"/>
<polygon points="781.0,296.0 795.0,290.0 798.5,298.0 785.0,304.0" fill="#e4e4e4"/>
<polygon points="824.0,290.0 834.0,285.5 836.0,292.0 828.0,296.5" fill="#d9d9d9"/>
<polygon points="839.4,274.0 848.8,270.0 854.8,283.0 850.8,285.0 847.8,278.0 844.9,279.5 847.8,286.0 844.9,288.0" fill="#d3d3d3"/>
<polygon points="821.0,311.0 838.0,303.5 840.0,308.0 823.0,315.5" fill="#d9d9d9"/>
<polygon points="842.4,302.0 856.0,296.5 856.0,301.0 844.4,306.0" fill="#d9d9d9"/>
<polygon points="848.0,318.0 852.0,309.0 856.0,311.0 853.0,320.0" fill="#d9d9d9"/>
<polygon points="760.0,337.0 778.0,327.0 792.0,318.0 823.0,318.0 823.0,321.0 811.0,328.0 817.0,332.0 815.0,334.0 810.0,329.0 805.0,332.0 793.0,338.0 798.0,343.0 789.0,358.0 798.0,361.0 796.0,366.0 782.0,364.0 772.0,350.0 764.0,346.0" fill="#d3d3d3"/>
<polygon points="797.0,322.0 805.0,318.5 807.0,323.0 799.0,326.5" fill="#e6e6e6"/>
<polygon points="785.0,331.0 791.0,328.5 793.0,332.5 787.0,335.0" fill="#e6e6e6"/>
<polygon points="779.0,341.0 784.0,339.0 783.0,345.0 779.0,346.0" fill="#e6e6e6"/>
<polygon points="776.0,347.0 782.0,349.0 780.0,358.0 775.0,356.0" fill="#e6e6e6"/>
<polygon points="766.0,338.0 773.0,334.0 775.0,338.0 768.0,342.0" fill="#e6e6e6"/>
<polygon points="745.0,341.0 753.0,338.0 771.0,346.0 775.0,358.0 760.0,349.0" fill="#dcdcdc"/>
<polygon points="825.9,320.5 841.9,324.0 840.9,328.0 825.4,324.0" fill="#d9d9d9"/>
<polygon points="845.4,325.0 856.0,328.0 856.0,331.5 844.9,328.5" fill="#d9d9d9"/>
<polygon points="829.4,332.0 848.8,336.5 847.8,341.0 828.7,336.0" fill="#d9d9d9"/>
<polygon points="835.9,346.4 854.8,350.9 854.3,354.9 834.9,350.4" fill="#d9d9d9"/>
<polygon points="829.4,356.4 854.8,362.4 853.8,366.9 828.7,360.9" fill="#d9d9d9"/>
<polygon points="822.4,335.0 826.9,336.5 824.4,345.4 819.9,344.1" fill="#d9d9d9"/>
<polygon points="818.9,353.4 824.9,354.4 823.9,358.9 817.9,357.7" fill="#d9d9d9"/>
<polygon points="803.9,354.4 808.9,355.4 806.9,364.9 801.9,363.9" fill="#d9d9d9"/>
<polygon points="806.9,362.9 835.9,369.4 835.4,373.9 805.9,367.4" fill="#d9d9d9"/>
<polygon points="837.4,367.9 856.0,372.4 856.0,376.9 836.9,372.4" fill="#d9d9d9"/>
<polygon points="703.0,352.0 721.0,356.0 732.0,359.0 729.0,364.0 722.0,373.0 717.0,369.0 707.0,360.0" fill="#d8d8d8"/>
<polygon points="722.0,376.0 733.0,362.0 745.0,360.0 771.0,366.0 765.0,372.0 757.0,368.0 742.0,384.0 750.0,392.0 745.0,398.0" fill="#dadada"/>
<polygon points="734.0,366.0 741.0,363.0 745.0,368.0 738.0,372.0" fill="#e9e9e9"/>
<polygon points="745.0,398.0 760.0,383.0 790.0,412.0 800.0,423.0 792.0,430.0" fill="#d6d6d6"/>
<polygon points="771.0,392.0 789.0,410.0 783.0,414.0 771.0,402.0" fill="#dcdcdc"/>
<polygon points="797.9,383.5 810.4,386.0 809.4,394.5 797.1,392.0" fill="#d2d2d2"/>
<polyline points="797.1,392.0 797.9,383.5 810.4,386.0" fill="none" stroke="#666666" stroke-width="1.25" stroke-linecap="butt" stroke-linejoin="miter" />
<polygon points="781.0,392.0 792.0,394.5 791.0,403.0 779.5,400.5" fill="#d2d2d2"/>
<polyline points="779.5,400.5 781.0,392.0 792.0,394.5" fill="none" stroke="#666666" stroke-width="1.25" stroke-linecap="butt" stroke-linejoin="miter" />
<polygon points="804.4,409.5 818.9,408.2 817.9,418.4 803.9,417.4" fill="#d2d2d2"/>
<polyline points="803.9,417.4 804.4,409.5 818.9,408.2" fill="none" stroke="#666666" stroke-width="1.25" stroke-linecap="butt" stroke-linejoin="miter" />
<polygon points="826.4,400.0 837.9,402.5 836.4,410.9 824.9,408.0" fill="#d6d6d6"/>
<polygon points="839.5,386.0 848.8,387.0 847.8,391.0 839.5,389.0" fill="#dcdcdc"/>
<polygon points="839.9,420.9 847.8,414.4 855.8,421.9 847.8,428.9" fill="#dddddd"/>
<polygon points="830.9,431.9 838.9,425.9 848.8,434.9 840.9,441.0" fill="#dddddd"/>
<polygon points="690.0,352.0 719.0,378.0 746.0,406.0 762.0,420.0 742.0,432.0 716.0,406.0 700.0,398.0 690.0,404.0" fill="#d7d7d7"/>
<polygon points="692.0,395.0 701.0,382.0 721.0,397.0 718.0,403.0 723.0,408.0 711.0,412.0 700.0,404.0" fill="#d2d2d2"/>
<polygon points="703.0,394.0 708.0,390.0 713.0,396.0 708.0,400.0" fill="#e4e4e4"/>
<polygon points="736.0,416.0 744.0,408.0 790.0,452.0 808.0,470.0 800.0,478.0" fill="#d4d4d4"/>
<polygon points="690.0,430.0 712.0,448.0 734.0,470.0 722.0,478.0 690.0,452.0" fill="#dadada"/>
<polygon points="690.0,455.0 711.0,467.0 707.0,470.0 690.0,480.0" fill="#d4d4d4"/>
<polygon points="712.0,462.0 722.0,456.0 760.0,492.0 748.0,498.0 735.0,486.0" fill="#e0e0e0"/>
<polygon points="789.0,438.0 800.0,438.0 827.0,471.0 825.0,473.0" fill="#d8d8d8"/>
<polygon points="807.0,449.0 813.0,446.0 821.0,456.0 816.0,460.0" fill="#cfcfcf"/>
<polygon points="830.9,475.0 836.9,468.0 855.8,486.0 850.9,492.0" fill="#d6d6d6"/>
<polygon points="838.0,462.0 849.0,450.0 856.0,456.0 856.0,474.0 848.0,472.0" fill="#dcdcdc"/>
<polygon points="771.0,457.0 780.0,464.9 775.0,469.9 771.0,466.9" fill="#d6d6d6"/>
<polygon points="790.0,470.9 795.0,466.9 802.9,474.9 797.9,480.9" fill="#d2d2d2"/>
<polygon points="808.9,471.9 814.9,469.9 822.9,479.9 830.9,484.9 826.9,489.9 817.9,484.9" fill="#d6d6d6"/>
<polygon points="810.9,487.9 820.9,479.9 834.9,493.9 826.9,498.0 817.9,498.0" fill="#d8d8d8"/>
<polygon points="776.0,446.0 786.0,456.0 778.0,462.0 770.0,454.0" fill="#dadada"/>
<polygon points="783.0,453.0 806.0,476.0 801.0,480.0 778.0,458.0" fill="#ececec"/>
<polyline points="692.5,300.9 711.0,318.0 706.0,323.0 698.0,331.0" fill="none" stroke="#5c5c5c" stroke-width="0.45" stroke-linecap="butt" stroke-linejoin="round" />
<polyline points="691.0,327.5 700.0,318.0" fill="none" stroke="#5c5c5c" stroke-width="0.45" stroke-linecap="butt" stroke-linejoin="round" />
<polyline points="696.0,336.5 712.0,319.5 709.5,318.0" fill="none" stroke="#5c5c5c" stroke-width="0.45" stroke-linecap="butt" stroke-linejoin="round" />
<polyline points="709.0,400.0 701.0,408.0" fill="none" stroke="#5c5c5c" stroke-width="0.45" stroke-linecap="butt" stroke-linejoin="round" />
<polyline points="706.0,389.0 715.0,396.0" fill="none" stroke="#5c5c5c" stroke-width="0.45" stroke-linecap="butt" stroke-linejoin="round" />
<polygon points="690.0,423.0 704.0,424.0 718.0,430.0 790.0,498.0 746.0,498.0 690.0,440.0" fill="#dbdbdb"/>
<polygon points="696.0,425.0 708.0,426.0 782.0,498.0 768.0,498.0" fill="#d2d2d2"/>
<polyline points="690.0,437.0 748.0,498.0" fill="none" stroke="#3c3c3c" stroke-width="0.55" stroke-linecap="butt" stroke-linejoin="round" />
<polyline points="690.0,431.0 757.0,498.0" fill="none" stroke="#3c3c3c" stroke-width="0.55" stroke-linecap="butt" stroke-linejoin="round" />
<polyline points="691.0,426.0 763.0,498.0" fill="none" stroke="#3c3c3c" stroke-width="0.55" stroke-linecap="butt" stroke-linejoin="round" />
<polyline points="696.0,425.0 769.0,498.0" fill="none" stroke="#3c3c3c" stroke-width="0.55" stroke-linecap="butt" stroke-linejoin="round" />
<polyline points="701.0,425.0 775.0,498.0" fill="none" stroke="#3c3c3c" stroke-width="0.55" stroke-linecap="butt" stroke-linejoin="round" />
<polyline points="706.0,426.0 781.0,498.0" fill="none" stroke="#3c3c3c" stroke-width="0.55" stroke-linecap="butt" stroke-linejoin="round" />
<polyline points="692.0,446.0 735.0,487.0" fill="none" stroke="#3c3c3c" stroke-width="0.55" stroke-linecap="butt" stroke-linejoin="round" />
<polyline points="713.0,428.0 788.0,498.0" fill="none" stroke="#3c3c3c" stroke-width="0.55" stroke-linecap="butt" stroke-linejoin="round" />
<polyline points="690.0,421.0 700.0,430.0" fill="none" stroke="#3c3c3c" stroke-width="0.55" stroke-linecap="butt" stroke-linejoin="round" />
<circle cx="715" cy="448" r="0.55" fill="#2a2a2a"/>
<circle cx="722" cy="460" r="0.55" fill="#2a2a2a"/>
<circle cx="736" cy="468" r="0.55" fill="#2a2a2a"/>
<circle cx="729" cy="449" r="0.55" fill="#2a2a2a"/>
<circle cx="748" cy="480" r="0.55" fill="#2a2a2a"/>
<circle cx="754" cy="472" r="0.55" fill="#2a2a2a"/>
<circle cx="744" cy="462" r="0.55" fill="#2a2a2a"/>
<circle cx="765" cy="490" r="0.55" fill="#2a2a2a"/>
<polyline points="692.0,409.0 716.0,431.0" fill="none" stroke="#777" stroke-width="0.45" stroke-linecap="butt" stroke-linejoin="round" stroke-dasharray="0.8 1.6"/>
<polyline points="745.0,460.0 790.0,498.0" fill="none" stroke="#777" stroke-width="0.45" stroke-linecap="butt" stroke-linejoin="round" stroke-dasharray="0.8 1.6"/>
<path d="M728 392 Q728.0 414 734.0 445.0" fill="none" stroke="#555" stroke-width="0.32"/>
<path d="M728 392 Q728.7 414 735.6 442.8" fill="none" stroke="#555" stroke-width="0.32"/>
<path d="M728 392 Q729.4 414 737.2 440.6" fill="none" stroke="#555" stroke-width="0.32"/>
<path d="M728 392 Q730.1 414 738.8 438.4" fill="none" stroke="#555" stroke-width="0.32"/>
<path d="M728 392 Q730.8 414 740.4 436.2" fill="none" stroke="#555" stroke-width="0.32"/>
<path d="M728 392 Q731.5 414 742.0 434.0" fill="none" stroke="#555" stroke-width="0.32"/>
<path d="M728.5 393 C729.0 420 745.0 447.0 768.0 443.0" fill="none" stroke="#555" stroke-width="0.32"/>
<path d="M728.5 393 C729.5 420 746.0 445.8 769.5 441.4" fill="none" stroke="#555" stroke-width="0.32"/>
<path d="M728.5 393 C730.0 420 747.0 444.6 771.0 439.8" fill="none" stroke="#555" stroke-width="0.32"/>
<path d="M728.5 393 C730.5 420 748.0 443.4 772.5 438.2" fill="none" stroke="#555" stroke-width="0.32"/>
<path d="M728.5 393 C731.0 420 749.0 442.2 774.0 436.6" fill="none" stroke="#555" stroke-width="0.32"/>
<path d="M728.5 393 C731.5 420 750.0 441.0 775.5 435.0" fill="none" stroke="#555" stroke-width="0.32"/>
<path d="M755 444 Q768 446 776 437 Q778 433 774 432" fill="none" stroke="#3a3a3a" stroke-width="0.45"/>
<polyline points="738.0,414.0 772.0,445.0" fill="none" stroke="#8a8a8a" stroke-width="0.35" stroke-linecap="butt" stroke-linejoin="round" />
<polyline points="740.2,411.9 774.2,442.9" fill="none" stroke="#8a8a8a" stroke-width="0.35" stroke-linecap="butt" stroke-linejoin="round" />
<polyline points="742.4,409.8 776.4,440.8" fill="none" stroke="#8a8a8a" stroke-width="0.35" stroke-linecap="butt" stroke-linejoin="round" />
<polyline points="744.6,407.7 778.6,438.7" fill="none" stroke="#8a8a8a" stroke-width="0.35" stroke-linecap="butt" stroke-linejoin="round" />
<polyline points="746.8,405.6 780.8,436.6" fill="none" stroke="#8a8a8a" stroke-width="0.35" stroke-linecap="butt" stroke-linejoin="round" />
<polyline points="749.0,403.5 783.0,434.5" fill="none" stroke="#8a8a8a" stroke-width="0.35" stroke-linecap="butt" stroke-linejoin="round" />
<polyline points="751.2,401.4 785.2,432.4" fill="none" stroke="#8a8a8a" stroke-width="0.35" stroke-linecap="butt" stroke-linejoin="round" />
<polyline points="753.4,399.3 787.4,430.3" fill="none" stroke="#8a8a8a" stroke-width="0.35" stroke-linecap="butt" stroke-linejoin="round" />
<polyline points="755.6,397.2 789.6,428.2" fill="none" stroke="#8a8a8a" stroke-width="0.35" stroke-linecap="butt" stroke-linejoin="round" />
<polyline points="752.0,379.0 760.0,386.0 762.0,384.0 770.0,392.0 768.0,394.0 776.0,401.0" fill="none" stroke="#555" stroke-width="0.45" stroke-linecap="butt" stroke-linejoin="miter" />
<polyline points="775.0,399.0 783.0,406.0 781.0,408.0 789.0,415.0" fill="none" stroke="#555" stroke-width="0.45" stroke-linecap="butt" stroke-linejoin="miter" />
<polyline points="706.0,386.0 715.0,394.0 717.0,392.0 722.0,397.0" fill="none" stroke="#555" stroke-width="0.45" stroke-linecap="butt" stroke-linejoin="miter" />
<polyline points="778.0,452.0 784.0,447.0 790.0,452.0 796.0,447.0" fill="none" stroke="#555" stroke-width="0.45" stroke-linecap="butt" stroke-linejoin="miter" />
<polyline points="771.0,441.0 777.0,446.0" fill="none" stroke="#555" stroke-width="0.45" stroke-linecap="butt" stroke-linejoin="miter" />
<polyline points="787.0,462.0 793.0,457.0" fill="none" stroke="#555" stroke-width="0.45" stroke-linecap="butt" stroke-linejoin="miter" />
<polyline points="806.0,441.0 811.0,446.0 808.0,449.0" fill="none" stroke="#555" stroke-width="0.45" stroke-linecap="butt" stroke-linejoin="miter" />
<polyline points="820.0,453.0 824.0,457.0 821.0,460.0" fill="none" stroke="#555" stroke-width="0.45" stroke-linecap="butt" stroke-linejoin="miter" />
<polyline points="716.0,466.0 728.0,476.0 730.0,474.0 744.0,486.0" fill="none" stroke="#555" stroke-width="0.45" stroke-linecap="butt" stroke-linejoin="miter" />
<polyline points="771.0,455.0 776.0,450.0 782.0,458.0 790.0,452.0 796.0,458.0" fill="none" stroke="#555" stroke-width="0.45" stroke-linecap="butt" stroke-linejoin="miter" />
<polyline points="779.0,463.0 785.0,470.0 789.0,466.0" fill="none" stroke="#555" stroke-width="0.45" stroke-linecap="butt" stroke-linejoin="miter" />
<polyline points="790.0,474.0 797.0,468.0" fill="none" stroke="#555" stroke-width="0.45" stroke-linecap="butt" stroke-linejoin="miter" />
<polyline points="797.0,446.0 808.0,436.0" fill="none" stroke="#555" stroke-width="0.45" stroke-linecap="butt" stroke-linejoin="miter" />
<polyline points="806.0,456.0 818.0,444.0" fill="none" stroke="#555" stroke-width="0.45" stroke-linecap="butt" stroke-linejoin="miter" />
<polyline points="813.0,484.0 820.0,476.0" fill="none" stroke="#555" stroke-width="0.45" stroke-linecap="butt" stroke-linejoin="miter" />
<polyline points="806.0,470.0 810.0,474.0" fill="none" stroke="#555" stroke-width="0.45" stroke-linecap="butt" stroke-linejoin="miter" />
<polyline points="823.0,462.0 829.0,467.0" fill="none" stroke="#555" stroke-width="0.45" stroke-linecap="butt" stroke-linejoin="miter" />
<polyline points="706.0,465.0 712.0,470.0" fill="none" stroke="#555" stroke-width="0.45" stroke-linecap="butt" stroke-linejoin="miter" />
<polyline points="838.0,470.0 844.0,476.0" fill="none" stroke="#555" stroke-width="0.45" stroke-linecap="butt" stroke-linejoin="miter" />
<polyline points="832.0,476.0 838.0,482.0" fill="none" stroke="#555" stroke-width="0.45" stroke-linecap="butt" stroke-linejoin="miter" />
<polyline points="690.3,244.9 700.0,236.4 711.5,233.4 743.9,205.2 753.6,196.6 808.7,169.2 827.9,155.1 840.0,138.5" fill="none" stroke="#0b0b0b" stroke-width="3.3" stroke-linecap="butt" stroke-linejoin="round" />
<polyline points="741.4,151.0 725.4,164.4 724.9,168.2 743.0,200.0 744.5,204.5" fill="none" stroke="#0b0b0b" stroke-width="3.3" stroke-linecap="butt" stroke-linejoin="round" />
<polyline points="740.9,152.0 748.4,165.0" fill="none" stroke="#0b0b0b" stroke-width="3.2" stroke-linecap="butt" stroke-linejoin="round" />
<polyline points="747.4,185.2 753.4,196.9" fill="none" stroke="#0b0b0b" stroke-width="3.2" stroke-linecap="round" stroke-linejoin="round" />
<polyline points="813.4,139.0 828.4,155.0 835.9,168.9 847.8,198.0 856.5,224.5" fill="none" stroke="#0b0b0b" stroke-width="3.3" stroke-linecap="butt" stroke-linejoin="round" />
<polyline points="805.9,151.4 815.8,142.8" fill="none" stroke="#0b0b0b" stroke-width="3.1" stroke-linecap="butt" stroke-linejoin="round" />
<polyline points="856.5,287.8 791.0,318.0 778.0,323.0 699.0,356.4" fill="none" stroke="#0b0b0b" stroke-width="3.1" stroke-linecap="butt" stroke-linejoin="round" />
<polyline points="690.0,336.7 710.0,346.9 727.9,354.9 733.9,356.9 778.0,366.9 829.9,378.4 856.5,386.9" fill="none" stroke="#0b0b0b" stroke-width="3.2" stroke-linecap="butt" stroke-linejoin="round" />
<polyline points="689.0,350.7 718.9,378.0 778.0,431.9 846.8,493.9 852.0,499.0" fill="none" stroke="#0b0b0b" stroke-width="6.2" stroke-linecap="butt" stroke-linejoin="round" />
<polyline points="733.6,357.2 730.9,362.9 722.9,372.9" fill="none" stroke="#0b0b0b" stroke-width="3.1" stroke-linecap="butt" stroke-linejoin="round" />
<polyline points="703.4,367.5 690.0,384.5" fill="none" stroke="#0b0b0b" stroke-width="3.3" stroke-linecap="butt" stroke-linejoin="round" />
<polyline points="826.5,473.3 857.0,438.8" fill="none" stroke="#0b0b0b" stroke-width="3.6" stroke-linecap="butt" stroke-linejoin="round" />
<polyline points="830.0,468.6 836.0,461.8" fill="none" stroke="#6a6a6a" stroke-width="0.9" stroke-linecap="butt" stroke-linejoin="round" />
<text x="811.8" y="221.3" font-size="6.3" text-anchor="middle" letter-spacing="1.1" fill="#1e1e1e" stroke="#f4f4f4" stroke-width="0.6" paint-order="stroke" stroke-linejoin="round" font-weight="normal">SAN</text>
<text x="811.5" y="229.3" font-size="6.3" text-anchor="middle" letter-spacing="1.15" fill="#1e1e1e" stroke="#f4f4f4" stroke-width="0.6" paint-order="stroke" stroke-linejoin="round" font-weight="normal">GIOVANNI A</text>
<text x="811.9" y="237.2" font-size="6.3" text-anchor="middle" letter-spacing="1.0" fill="#1e1e1e" stroke="#f4f4f4" stroke-width="0.6" paint-order="stroke" stroke-linejoin="round" font-weight="normal">TEDUCCIO</text>
<text x="811.8" y="221.3" font-size="6.3" text-anchor="middle" letter-spacing="1.1" fill="#1e1e1e" stroke="#1e1e1e" stroke-width="0.22">SAN</text>
<text x="811.5" y="229.3" font-size="6.3" text-anchor="middle" letter-spacing="1.15" fill="#1e1e1e" stroke="#1e1e1e" stroke-width="0.22">GIOVANNI A</text>
<text x="811.9" y="237.2" font-size="6.3" text-anchor="middle" letter-spacing="1.0" fill="#1e1e1e" stroke="#1e1e1e" stroke-width="0.22">TEDUCCIO</text>
<text x="807.6" y="305.2" font-size="5.5" text-anchor="middle" letter-spacing="0" fill="#3a3a3a" stroke="#f4f4f4" stroke-width="0.9" paint-order="stroke" stroke-linejoin="round" font-weight="normal" transform="rotate(-24.2 807.6 305.2)">Corso Nicolangelo Protopisani</text>
<text x="813.4" y="379.6" font-size="5.6" text-anchor="middle" letter-spacing="0" fill="#3a3a3a" stroke="#f4f4f4" stroke-width="0.9" paint-order="stroke" stroke-linejoin="round" font-weight="normal" transform="rotate(13.2 813.4 379.6)">Via Taverna del Ferro</text>
<text x="756.6" y="477" font-size="4.7" text-anchor="middle" letter-spacing="0" fill="#4a4a4a" stroke="#f4f4f4" stroke-width="0.8" paint-order="stroke" stroke-linejoin="round" font-weight="normal">Napoli-San</text>
<text x="758" y="482.7" font-size="4.7" text-anchor="middle" letter-spacing="0" fill="#4a4a4a" stroke="#f4f4f4" stroke-width="0.8" paint-order="stroke" stroke-linejoin="round" font-weight="normal">Giovanni-Barra</text>
<text x="830" y="479.5" font-size="4.2" text-anchor="middle" letter-spacing="0" fill="#e8e8e8" stroke="#666" stroke-width="0.5" paint-order="stroke" stroke-linejoin="round" font-weight="normal" transform="rotate(41.5 830 479.5)">Corso San Giov</text>
<text x="853" y="240.5" font-size="3.6" text-anchor="middle" letter-spacing="0" fill="#555" stroke="#f4f4f4" stroke-width="0.5" paint-order="stroke" stroke-linejoin="round" font-weight="normal" transform="rotate(25 853 240.5)">Str</text>
<circle cx="732.6" cy="161.8" r="2.15" fill="#33e0b0"/>
<circle cx="786.2" cy="160.6" r="2.15" fill="#d6f53e"/>
<circle cx="760" cy="188" r="2.15" fill="#b4f552"/>
<circle cx="786.7" cy="187.2" r="2.15" fill="#f5f03c"/>
<circle cx="813.4" cy="186.7" r="2.15" fill="#30d5b0"/>
<circle cx="787.2" cy="214" r="2.15" fill="#2fd5ae"/>
<circle cx="734.1" cy="241.9" r="2.15" fill="#b0f55a"/>
<circle cx="760.9" cy="241.4" r="2.15" fill="#62f08c"/>
<circle cx="787.8" cy="240.8" r="2.15" fill="#4df09a"/>
<circle cx="814.6" cy="240.3" r="2.15" fill="#2fd5ae"/>
<circle cx="841.3" cy="239.7" r="2.15" fill="#2fd5ae"/>
<circle cx="734.7" cy="268.6" r="2.15" fill="#72f57c"/>
<circle cx="761.6" cy="268.3" r="2.15" fill="#6df58c"/>
<circle cx="788.5" cy="267.7" r="2.15" fill="#f0f535"/>
<circle cx="815.2" cy="267.2" r="2.15" fill="#f7f235"/>
<circle cx="735.4" cy="295.5" r="2.15" fill="#c5f542"/>
<circle cx="762.1" cy="295" r="2.15" fill="#2fd5ae"/>
<circle cx="789" cy="294.4" r="2.15" fill="#5cf58f"/>
<circle cx="815.7" cy="293.8" r="2.15" fill="#5cf58f"/>
<circle cx="842.7" cy="293.1" r="2.15" fill="#70f570"/>
<circle cx="735.9" cy="322.2" r="2.15" fill="#72f57c"/>
<circle cx="762.8" cy="321.8" r="2.15" fill="#68f580"/>
<circle cx="789.6" cy="321.3" r="2.15" fill="#8cf55a"/>
<circle cx="816.2" cy="320.7" r="2.15" fill="#4df585"/>
<circle cx="709.8" cy="349.6" r="2.15" fill="#c8f53c"/>
<circle cx="736.5" cy="348.9" r="2.15" fill="#72f57c"/>
<circle cx="763.4" cy="348.4" r="2.15" fill="#68f57c"/>
<circle cx="710.2" cy="376.3" r="2.15" fill="#d8f53a"/>
<circle cx="737.1" cy="375.8" r="2.15" fill="#f5f03c"/>
<circle cx="844.2" cy="373.5" r="2.15" fill="#8cf550"/>
<circle cx="711" cy="403.1" r="2.15" fill="#a0f550"/>
<circle cx="737.6" cy="402.7" r="2.15" fill="#f5f03c"/>
<circle cx="764.3" cy="402.1" r="2.15" fill="#f5f03c"/>
<circle cx="711.5" cy="429.9" r="2.15" fill="#84f560"/>
<circle cx="765" cy="428.9" r="2.15" fill="#f5f03c"/>
<circle cx="792" cy="428.2" r="2.15" fill="#f5f03c"/>
<circle cx="818.5" cy="427.7" r="2.15" fill="#e0f530"/>
<circle cx="712" cy="456.8" r="2.15" fill="#90f560"/>
<circle cx="738.9" cy="456.2" r="2.15" fill="#70f570"/>
<circle cx="765.6" cy="455.8" r="2.15" fill="#f5f03c"/>
<circle cx="792.2" cy="455.2" r="2.15" fill="#f5f03c"/>
<circle cx="819.2" cy="454.5" r="2.15" fill="#f5f03c"/>
<circle cx="845.9" cy="454" r="2.15" fill="#f5f03c"/>
<circle cx="739.4" cy="482.9" r="2.15" fill="#90f550"/>
<circle cx="766.1" cy="482.4" r="2.15" fill="#60f570"/>
<circle cx="846.5" cy="480.7" r="2.15" fill="#f5f03c"/>
<rect x="694" y="168.6" width="55.6" height="1.6" fill="#fafafa" stroke="#8a8a8a" stroke-width="0.3"/>
<rect x="693.8" y="168.4" width="28.1" height="2" fill="#0c240c"/>
<text x="694" y="167.2" font-size="3.4" fill="#222" stroke="#f4f4f4" stroke-width="0.5" paint-order="stroke">0</text>
<text x="721.6" y="167.2" font-size="3.4" fill="#222" text-anchor="middle" stroke="#f4f4f4" stroke-width="0.5" paint-order="stroke">200 ft</text>
<text x="750" y="167.2" font-size="3.4" fill="#222" text-anchor="middle" stroke="#f4f4f4" stroke-width="0.5" paint-order="stroke">400 ft</text>
<circle cx="844.4" cy="171.9" r="7.8" fill="#101010"/>
<circle cx="844.4" cy="171.9" r="5.9" fill="none" stroke="#f0f0f0" stroke-width="1.2" stroke-dasharray="0.45 1.095"/>
<path d="M844.4 167.8 L846.0 170.70000000000002 L842.8 170.70000000000002 Z" fill="#f0383c"/>
<text x="844.4" y="175.6" font-size="4.2" font-weight="bold" fill="#f0f0f0" text-anchor="middle">N</text>
<rect x="772" y="271" width="42.9" height="16.9" rx="0.8" fill="#ffffff"/>
<text x="793.4" y="282" font-size="6.15" fill="#2e2e2e" text-anchor="middle">Hello world!</text>
<ellipse cx="772.3" cy="302.9" rx="3.2" ry="1.2" fill="#8e8e8e" opacity="0.7"/>
<path d="M772.3 302.9 C771.0999999999999 299.5 768.3 297.9 768.3 295.29999999999995 A4 4 0 0 1 776.3 295.29999999999995 C776.3 297.9 773.5 299.5 772.3 302.9 Z" fill="#ee3a3f" stroke="#b8262b" stroke-width="0.4"/>
<circle cx="772.3" cy="295.5" r="1.35" fill="#fff"/>
<circle cx="698.5" cy="475.7" r="3.3" fill="#fbfbfb" stroke="#7c7c7c" stroke-width="0.7"/>
<circle cx="698.6" cy="475.6" r="1.7" fill="none" stroke="#8a8a8a" stroke-width="0.7"/>
<path d="M697.2 477.6 L697.6 476.2 L698.6 477 Z" fill="#8a8a8a"/>
<text x="703.6" y="478" font-size="6.9" font-weight="bold" fill="#fafafa" stroke="#8c8c8c" stroke-width="0.9" paint-order="stroke" letter-spacing="-0.1">mapbox</text>
<circle cx="843.4" cy="474.7" r="4.1" fill="#f4f8ff" fill-opacity="0.85" stroke="#2f8cf0" stroke-width="0.8"/>
<text x="843.4" y="477.3" font-size="7" font-weight="bold" fill="#2f8cf0" text-anchor="middle" font-family="Liberation Serif, serif">i</text>
</svg>
</div>
<svg style="left:548.50px;top:118.50px" width="76.4" height="14.3" viewBox="734.8 139.5 76.4 14.3"><path d="M734.8 139.5 H811.2 V140.3 Q807.2 140.3 807.2 143.6 V148.0 Q807.2 153.6 801.6 153.6 H744.4 Q738.8 153.6 738.8 148.0 V143.6 Q738.8 140.3 734.8 140.3 Z" fill="#000"/></svg>
<div class="a" style="left:391.9px;top:505.5px;width:390.3px;height:15.8px;background:#27262c"></div>
<div class="a" style="left:0;top:521.4px;width:782px;height:1.1px;background:#141316"></div>
<svg style="left:397.3px;top:510px" width="8" height="8" viewBox="0 0 8 8"><path d="M4.6 0.6 L7.4 3.4 L6.6 3.8 L5.6 3.6 L4.4 4.8 L4.4 6.2 L3.8 6.6 L1.4 4.2 L1.8 3.6 L3.2 3.6 L4.4 2.4 L4.2 1.4 Z M2.6 5.4 L0.6 7.4" fill="none" stroke="#c2c1c6" stroke-width="0.65" stroke-linejoin="round"/></svg>
<svg style="left:414.1px;top:510.6px" width="7.4" height="6.8" viewBox="0 0 7.4 6.8"><path d="M0.3 0.8 H1.3 M2.4 0.8 H7.1 M0.3 3.4 H1.3 M2.4 3.4 H7.1 M0.3 6 H1.3 M2.4 6 H7.1" stroke="#6c6b71" stroke-width="0.75"/></svg>
<svg style="left:720.7px;top:509.8px" width="8" height="8" viewBox="0 0 8 8"><circle cx="3.3" cy="3.3" r="2.8" fill="none" stroke="#9b9aa0" stroke-width="0.7"/><path d="M5.4 5.4 L7.5 7.5" stroke="#9b9aa0" stroke-width="0.8" stroke-linecap="round"/><path d="M2 3.3 H4.6" stroke="#9b9aa0" stroke-width="0.6"/></svg>
<div class="t1" style="left:736.0px;top:509px;font-size:7.4px;font-weight:bold;color:#f0f0f2">75%</div>
<svg style="left:758.3px;top:512.8px" width="4" height="2.8" viewBox="0 0 4 2.8"><path d="M0.4 0.4 L2 2.1 L3.6 0.4" fill="none" stroke="#e6e6e8" stroke-width="0.8"/></svg>
<svg style="left:767.3px;top:509.8px" width="8" height="8" viewBox="0 0 8 8"><circle cx="3.3" cy="3.3" r="2.8" fill="none" stroke="#9b9aa0" stroke-width="0.7"/><path d="M5.4 5.4 L7.5 7.5" stroke="#9b9aa0" stroke-width="0.8" stroke-linecap="round"/><path d="M2 3.3 H4.6 M3.3 2 V4.6" stroke="#9b9aa0" stroke-width="0.6"/></svg>
<div class="a" style="left:0;top:522.5px;width:782px;height:15px;background:#211d27"></div>
<svg style="left:6.1px;top:527.3px" width="9.2" height="5.4" viewBox="0 0 9.2 5.4"><path d="M1 0 H6.4 Q6.9 0 7.3 0.4 L8.9 2.3 Q9.2 2.7 8.9 3.1 L7.3 5 Q6.9 5.4 6.4 5.4 H1 Q0 5.4 0 4.4 V1 Q0 0 1 0 Z" fill="#0a84ff"/></svg>
<div class="a" style="left:25.9px;top:526.2px;width:1.6px;height:7.6px;background:#a9a8ae"></div><div class="a" style="left:29.0px;top:526.2px;width:1.6px;height:7.6px;background:#a9a8ae"></div>
<svg style="left:41.3px;top:526.8px" width="7" height="6.4" viewBox="0 0 7 6.4"><path d="M0.5 4.4 Q3.5 -1 6.5 4.4 M5 4.4 H6.5 V2.9" fill="none" stroke="#5f5e66" stroke-width="0.7"/><path d="M1.8 5.9 H5.2" stroke="#5f5e66" stroke-width="0.7"/></svg>
<svg style="left:58.7px;top:526.6px" width="6" height="6.8" viewBox="0 0 6 6.8"><path d="M3 0.3 V4.4 M1.4 2.9 L3 4.5 L4.6 2.9" fill="none" stroke="#5f5e66" stroke-width="0.7"/><path d="M0.6 6.2 H5.4" stroke="#5f5e66" stroke-width="0.7"/></svg>
<svg style="left:75.7px;top:526.6px" width="6" height="6.8" viewBox="0 0 6 6.8"><path d="M3 4.6 V0.5 M1.4 2 L3 0.4 L4.6 2" fill="none" stroke="#5f5e66" stroke-width="0.7"/><path d="M0.6 6.2 H5.4" stroke="#5f5e66" stroke-width="0.7"/></svg>
<div class="a" style="left:87.7px;top:526.4px;width:0.6px;height:7.2px;background:#34313b"></div>
<div class="a" style="left:19.3px;top:526.4px;width:0.6px;height:7.2px;background:#34313b"></div>
<svg style="left:92.7px;top:526.4px" width="7" height="7.2" viewBox="0 0 7 7.2"><path d="M3.5 0.4 L6.4 1.9 V5.1 L3.5 6.8 L0.6 5.1 V1.9 Z" fill="none" stroke="#a9a8ae" stroke-width="0.7" stroke-linejoin="round"/><path d="M3.5 3.5 V6.7 L0.7 5.1 V2 Z" fill="#a9a8ae"/></svg>
<svg style="left:109.3px;top:526.6px" width="8" height="6.8" viewBox="0 0 8 6.8"><circle cx="1.4" cy="1.4" r="1" fill="none" stroke="#a9a8ae" stroke-width="0.65"/><circle cx="1.4" cy="5.4" r="1" fill="none" stroke="#a9a8ae" stroke-width="0.65"/><circle cx="6.4" cy="3.4" r="1" fill="none" stroke="#a9a8ae" stroke-width="0.65"/><path d="M2.3 1.8 L5.4 3.2 M2.3 5 L5.4 3.6" stroke="#a9a8ae" stroke-width="0.65"/></svg>
<svg style="left:126.3px;top:526.4px" width="7" height="7.2" viewBox="0 0 7 7.2"><rect x="1.2" y="0.4" width="4.6" height="2.6" rx="1" fill="none" stroke="#a9a8ae" stroke-width="0.75"/><rect x="1.2" y="4.2" width="4.6" height="2.6" rx="1" fill="none" stroke="#a9a8ae" stroke-width="0.75"/><path d="M2 3 V4.2 M5 3 V4.2" stroke="#a9a8ae" stroke-width="0.7"/></svg>
<svg style="left:143.7px;top:526.6px" width="7" height="7" viewBox="0 0 7 7"><path d="M6.4 0.6 L0.6 3 L3.4 3.6 L4 6.4 Z" fill="none" stroke="#a9a8ae" stroke-width="0.7" stroke-linejoin="round"/></svg>
<div class="a" style="left:155.7px;top:526.4px;width:0.6px;height:7.2px;background:#34313b"></div>
<svg style="left:160.3px;top:526.8px" width="8" height="6.4" viewBox="0 0 8 6.4"><path d="M0.6 6 V0.8 L3.2 3.8 L4.4 2 M3.6 1 L7.4 6" fill="none" stroke="#a9a8ae" stroke-width="0.75" stroke-linejoin="round"/></svg>
<div class="a" style="left:173.2px;top:526.4px;width:0.6px;height:7.2px;background:#34313b"></div>
<div class="a" style="left:177.9px;top:525.6px;width:8.8px;height:8.8px;border-radius:2px;background:#e4e4e6"></div>
<div class="t1" style="left:189.2px;top:525px;font-size:6.7px;color:#dddce0">MapBoxWithSwiftUI</div>
<div class="t1" style="left:711.2px;top:525px;font-size:6.45px;color:#c2c1c7;word-spacing:0.3px">Line: 22&nbsp; Col: 1</div>
<div class="a" style="left:762.7px;top:526.4px;width:0.6px;height:7.2px;background:#34313b"></div>
<svg style="left:767.3px;top:526.5px" width="8" height="7" viewBox="0 0 8 7"><rect x="0.4" y="0.4" width="7.2" height="6.2" rx="1.2" fill="none" stroke="#b5b4ba" stroke-width="0.75"/><rect x="1.4" y="3.8" width="5.2" height="1.9" rx="0.4" fill="#b5b4ba"/></svg>
</div>
<div id="rim"></div>
</div>
</body></html>
